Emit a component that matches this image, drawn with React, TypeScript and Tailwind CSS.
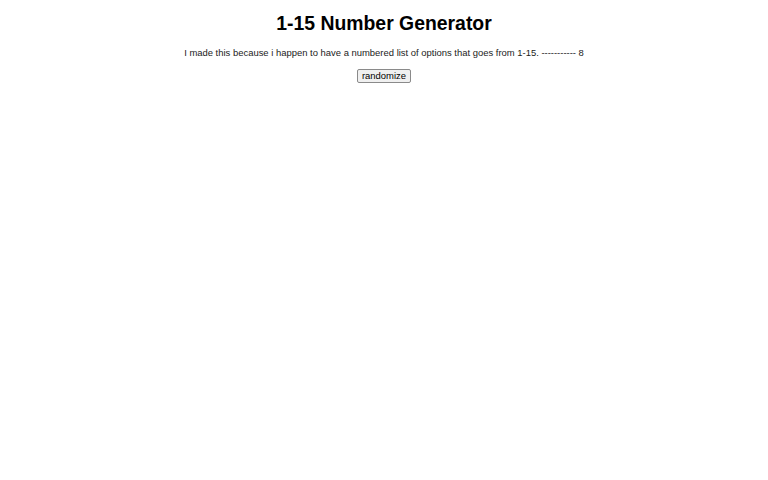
export default function App() {
  return (
    <div className="flex flex-col items-center bg-white text-black font-['Liberation_Sans',Arial,sans-serif]">
      <h1 className="mt-[11px] text-[19.4px] font-bold leading-[24px]">1-15 Number Generator</h1>
      <p className="mt-[12px] text-[9.45px] leading-[12px] text-[#222]">
        I made this because i happen to have a numbered list of options that goes from 1-15. ----------- 8
      </p>
      <button className="mt-[10px] px-[4px] border border-[#8a8a8a] rounded-[2px] bg-[#f0f0f0] text-[9.45px] leading-[12px] h-[14px]">
        randomize
      </button>
    </div>
  );
}
